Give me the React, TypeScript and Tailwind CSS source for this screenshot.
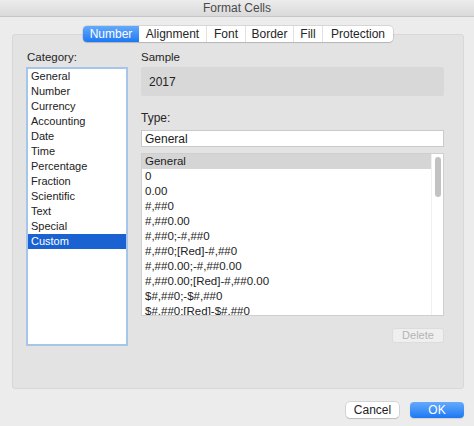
import React from "react";

const categories = [
	"General",
	"Number",
	"Currency",
	"Accounting",
	"Date",
	"Time",
	"Percentage",
	"Fraction",
	"Scientific",
	"Text",
	"Special",
	"Custom",
];

const formats = [
	"General",
	"0",
	"0.00",
	"#,##0",
	"#,##0.00",
	"#,##0;-#,##0",
	"#,##0;[Red]-#,##0",
	"#,##0.00;-#,##0.00",
	"#,##0.00;[Red]-#,##0.00",
	"$#,##0;-$#,##0",
	"$#,##0;[Red]-$#,##0",
];

const tabs = [
	{ label: "Number", w: "w-[56px]", active: true },
	{ label: "Alignment", w: "w-[67px]" },
	{ label: "Font", w: "w-[39px]" },
	{ label: "Border", w: "w-[48px]" },
	{ label: "Fill", w: "w-[29px]" },
	{ label: "Protection", w: "w-[71px]" },
];

const App: React.FC = () => {
	return (
		<div className="w-[474px] h-[426px] bg-[#ececec] flex flex-col font-['Liberation_Sans',Arial,sans-serif] text-[11px] text-[#222]">
			{/* title bar */}
			<div className="h-[17px] flex items-center justify-center bg-gradient-to-b from-[#ececec] to-[#dadada] border-b border-[#c6c6c6] text-[12px] text-[#4a4a4a]">
				Format Cells
			</div>

			<div className="pl-[12px] pr-[10px]">
				{/* tabs */}
				<div className="relative z-10 mt-[9px] flex justify-center">
					<div className="flex h-[16px] rounded-[4px] bg-white overflow-hidden shadow-[0_0_0_0.5px_rgba(0,0,0,0.18),0_1px_1px_rgba(0,0,0,0.12)]">
						{tabs.map((t, i) => (
							<div
								key={t.label}
								className={
									t.active
										? `${t.w} flex items-center justify-center text-[12px] text-white bg-gradient-to-b from-[#63aafc] to-[#1b77f3]`
										: `${t.w} flex items-center justify-center text-[12px] text-[#262626] ${i > 1 ? "border-l border-[#e2e2e2]" : ""}`
								}
							>
								{t.label}
							</div>
						))}
					</div>
				</div>

				{/* panel */}
				<div className="-mt-[8px] h-[355px] bg-[#e3e3e3] border border-[#d8d8d8] rounded-[3px] flex pt-[15px] pl-[13px]">
					{/* category column */}
					<div className="w-[102px] flex flex-col">
						<div className="h-[14px] leading-[14px] pl-[1px] text-[#262626] text-[11.5px]">Category:</div>
						<div className="mt-[3px] h-[279px] bg-white border-2 border-[#a6c5ea]">
							{categories.map((c) => (
								<div
									key={c}
									className={
										c === "Custom"
											? "h-[15px] leading-[15px] pl-[3px] bg-[#1a62d2] text-white"
											: "h-[15px] leading-[15px] pl-[3px] text-[#222]"
									}
								>
									{c}
								</div>
							))}
						</div>
					</div>

					{/* type column */}
					<div className="ml-[13px] w-[303px] flex flex-col">
						<div className="h-[14px] leading-[14px] text-[#262626] text-[11.5px]">Sample</div>
						<div className="mt-[3px] h-[29px] bg-[#d8d8d8] rounded-[2px] flex items-center pl-[8px] text-[12px] text-[#222]">
							2017
						</div>
						<div className="mt-[15px] h-[14px] leading-[14px] text-[#262626] text-[12px]">Type:</div>
						<div className="mt-[5px] h-[17px] bg-white border border-[#cacaca] flex items-center pl-[3px] text-[12px]">
							General
						</div>
						<div className="mt-[6px] h-[163px] bg-white border border-[#cfcfcf] flex overflow-hidden text-[11.5px]">
							<div className="flex-1 overflow-hidden">
								{formats.map((f, i) => (
									<div
										key={f}
										className={
											i === 0
												? "h-[15px] leading-[15px] pl-[3px] bg-[#d5d5d5] whitespace-nowrap"
												: "h-[15px] leading-[15px] pl-[3px] whitespace-nowrap"
										}
									>
										{f}
									</div>
								))}
							</div>
							<div className="w-[12px] border-l border-[#f0f0f0] flex justify-center">
								<div className="mt-[3px] w-[6px] h-[40px] rounded-full bg-[#c2c2c2]" />
							</div>
						</div>
						<div className="mt-[12px] flex justify-end">
							<div className="w-[52px] h-[15px] rounded-[3px] bg-[#efefef] border border-[#dcdcdc] flex items-center justify-center text-[#b4b4b4]">
								Delete
							</div>
						</div>
					</div>
				</div>

				{/* footer buttons */}
				<div className="mt-[13px] flex justify-end gap-[11px]">
					<div className="w-[53px] h-[16px] rounded-[4px] bg-white flex items-center justify-center text-[12px] text-[#222] shadow-[0_0_0_0.5px_rgba(0,0,0,0.2),0_1px_1px_rgba(0,0,0,0.12)]">
						Cancel
					</div>
					<div className="w-[54px] h-[16px] rounded-[4px] bg-gradient-to-b from-[#63aafc] to-[#1b77f3] flex items-center justify-center text-[12px] text-white shadow-[0_1px_1px_rgba(0,0,0,0.12)]">
						OK
					</div>
				</div>
			</div>
		</div>
	);
};

export default App;
